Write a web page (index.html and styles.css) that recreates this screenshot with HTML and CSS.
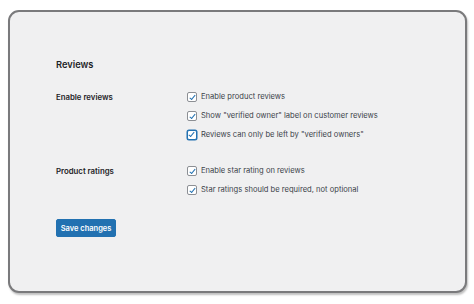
FILE: index.html
```html
<!DOCTYPE html>
<html>
<head>
    <title>Reviews settings</title>
    <link rel="stylesheet" href="styles.css">
</head>
<body>
    <div class="panel">
        <h2 class="section-title">Reviews</h2>

        <div class="form-row">
            <div class="row-label">Enable reviews</div>
            <div class="row-options">
                <label class="option"><span class="check"></span>Enable product reviews</label>
                <label class="option"><span class="check"></span>Show "verified owner" label on customer reviews</label>
                <label class="option"><span class="check focused"></span>Reviews can only be left by "verified owners"</label>
            </div>
        </div>

        <div class="form-row">
            <div class="row-label">Product ratings</div>
            <div class="row-options">
                <label class="option"><span class="check"></span>Enable star rating on reviews</label>
                <label class="option"><span class="check"></span>Star ratings should be required, not optional</label>
            </div>
        </div>

        <button class="save-button">Save changes</button>
    </div>
</body>
</html>
```

FILE: styles.css
```css
body {
    margin: 0;
    padding: 10px 7px 11px 8px;
    background-color: #ffffff;
    font-family: Inter, "Liberation Sans", sans-serif;
    color: #1d2327;
}

.panel {
    height: 283px;
    box-sizing: border-box;
    padding: 47px 0 0 46px;
    background-color: #f0f0f1;
    border: 2px solid #7a7a7c;
    border-radius: 11px;
    box-shadow: 1px 2px 2px rgba(0, 0, 0, 0.25);
}

.section-title {
    font-size: 9.3px;
    font-weight: 600;
    margin: 0 0 20px 0;
    line-height: 12px;
}

.form-row {
    display: flex;
    margin-bottom: 24px;
}

.form-row + .form-row {
    margin-bottom: 23px;
}

.row-label {
    width: 131px;
    font-size: 7.8px;
    font-weight: 600;
    line-height: 12px;
}

.row-options {
    display: flex;
    flex-direction: column;
    gap: 7px;
}

.option {
    display: flex;
    align-items: center;
    font-size: 7.6px;
    line-height: 12px;
    color: #3c434a;
}

.check {
    width: 10px;
    height: 10px;
    box-sizing: border-box;
    margin-right: 4px;
    border: 1px solid #8c8f94;
    border-radius: 2px;
    background-color: #ffffff;
    position: relative;
}

.check::after {
    content: "";
    position: absolute;
    left: 2.6px;
    top: 0.8px;
    width: 2.4px;
    height: 4.8px;
    border: solid #2271b1;
    border-width: 0 1.2px 1.2px 0;
    transform: rotate(40deg);
}

.check.focused {
    border: 1.5px solid #2271b1;
    box-shadow: 0 0 0 0.5px #2271b1;
}

.check.focused::after {
    left: 2.2px;
    top: 0.3px;
}

.save-button {
    display: block;
    width: 60px;
    height: 18px;
    padding: 0;
    font-family: inherit;
    font-size: 7.5px;
    font-weight: 600;
    color: #ffffff;
    background-color: #2271b1;
    border: 1px solid #2271b1;
    border-radius: 2px;
}
```
